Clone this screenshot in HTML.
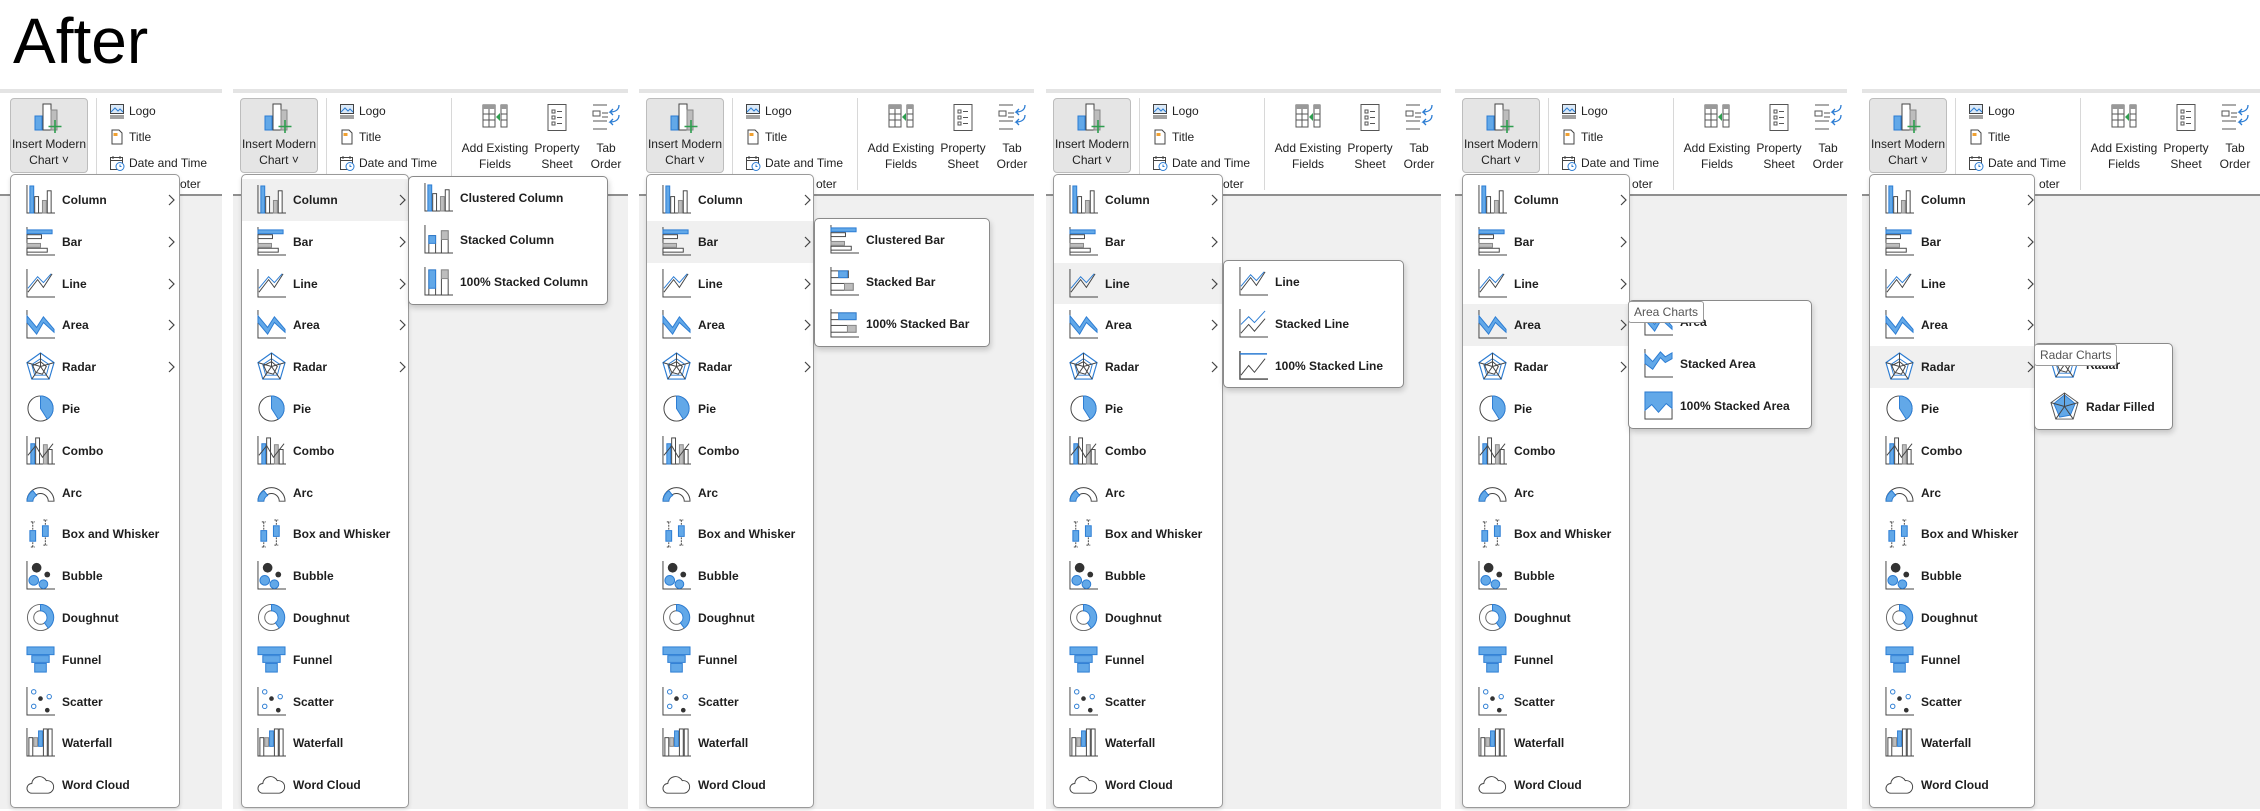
<!DOCTYPE html>
<html><head><meta charset="utf-8"><style>
*{box-sizing:border-box;margin:0;padding:0}
body{width:2260px;height:811px;background:#fff;position:relative;overflow:hidden;font-family:"Liberation Sans",Arial,sans-serif;color:#1f1f1f}
.h1{position:absolute;left:13px;top:1px;font-size:64px;line-height:80px;color:#000}
.p{position:absolute;top:0;height:811px;overflow:hidden}
.strip{position:absolute;left:0;right:0;top:89px;height:4px;background:#e4e4e4}
.rib{position:absolute;left:0;right:0;top:93px;height:101px;background:#fff}
.rl{position:absolute;left:0;right:0;top:194px;height:2px;background:#8f8f8f}
.gr{position:absolute;left:0;right:0;top:196px;height:613px;background:#f0f0f0}
.btn{position:absolute;left:7px;top:98px;width:78px;height:75px;background:#e5e5e5;border:1px solid #bdbdbd;border-radius:4px;font-size:12px;text-align:center;color:#222}
.btn svg{position:absolute;left:22px;top:3px}
.btn .t1{position:absolute;left:0;right:0;top:38px;line-height:14px}
.btn .t2{position:absolute;left:0;right:0;top:54px;line-height:14px}
.sep{position:absolute;top:98px;height:92px;width:1px;background:#d8d8d8}
.sm{position:absolute;font-size:12px;line-height:14px;color:#222;white-space:nowrap}
.sm svg{position:absolute;left:-20px;top:-1px}
.big{position:absolute;top:103px;width:70px;margin-left:-35px;text-align:center;font-size:12px;line-height:16px;color:#222}
.big svg{display:block;margin:0 auto 9px}
.menu{position:absolute;top:174px;height:634px;background:#fff;border:1px solid #9a9a9a;border-radius:5px;padding-top:4px;box-shadow:0 2px 4px rgba(0,0,0,.12)}
.sub{position:absolute;background:#fff;border:1px solid #8a8a8a;border-radius:5px;box-shadow:1px 3px 6px rgba(0,0,0,.18)}
.it{position:relative;height:41.8px;font-size:12px;font-weight:bold;color:#1e1e1e;white-space:nowrap}
.sub .it{height:42px}
.it svg.ic{position:absolute;left:15px;top:6px}
.it span{position:absolute;left:51px;top:14px;line-height:14px}
.sub .it svg.ic{left:15px}
.sub .it span{left:51px}
.it svg.ch{position:absolute;left:156px;top:15px}
.hl{background:#f0f0f0}
.tip{position:absolute;background:#fff;border:1px solid #9a9a9a;border-radius:3px;font-size:12px;color:#555;line-height:20px;padding:0 5px;white-space:nowrap;z-index:5}
</style></head><body>
<svg width="0" height="0" style="position:absolute">
<defs>
<symbol id="ch" viewBox="0 0 8 12"><path d="M2 1l5 5-5 5" fill="none" stroke="#444" stroke-width="1.2"/></symbol>
<symbol id="ins" viewBox="0 0 32 32"><rect x="2" y="14" width="7" height="14" fill="#62a8e8" stroke="#2b7cd3"/><rect x="10" y="2" width="8" height="26" fill="#fff" stroke="#444"/><rect x="18" y="8" width="6" height="20" fill="#bdbdbd" stroke="#888"/><path d="M22 18v13M15.5 24.5h13" stroke="#2e9e4f" stroke-width="1.6"/></symbol>
<symbol id="logo" viewBox="0 0 16 16"><rect x="1.5" y="1.5" width="13" height="9" fill="#dbe9f7" stroke="#444"/><path d="M2 9l4-4 3 3 2-2 3 3" fill="none" stroke="#2b7cd3"/><path d="M1 13h14M1 15h14" stroke="#444"/></symbol>
<symbol id="title" viewBox="0 0 16 16"><path d="M3 1h7l3 3v11H3z" fill="#fff" stroke="#444"/><rect x="4.5" y="4" width="4" height="3" fill="#f0a030"/></symbol>
<symbol id="date" viewBox="0 0 16 16"><rect x="1.5" y="2.5" width="12" height="12" fill="#fff" stroke="#444"/><path d="M1.5 5.5h12M4 1v3M11 1v3" stroke="#444"/><circle cx="11" cy="11.5" r="4" fill="#fff" stroke="#2b7cd3"/><path d="M11 9.5v2h1.5" fill="none" stroke="#2b7cd3"/></symbol>
<symbol id="add" viewBox="0 0 28 28"><rect x="2" y="2" width="12" height="22" fill="#fff" stroke="#555"/><rect x="2" y="2" width="12" height="4" fill="#999"/><path d="M2 11h12M2 17h12M8 6v18" stroke="#555"/><rect x="20" y="2" width="6" height="22" fill="#fff" stroke="#555"/><rect x="20" y="2" width="6" height="4" fill="#999"/><path d="M20 11h6M20 17h6" stroke="#555"/><path d="M19 10l-4 4 4 4z" fill="#2e9e4f"/></symbol>
<symbol id="prop" viewBox="0 0 28 28"><rect x="5" y="1.5" width="18" height="26" fill="#fff" stroke="#555"/><path d="M9 7h3v3H9zM9 13h3v3H9zM9 19h3v3H9zM14 8.5h5M14 14.5h5M14 20.5h5" fill="none" stroke="#555"/></symbol>
<symbol id="tab" viewBox="0 0 28 28"><path d="M1 2h14M1 26h14" stroke="#555"/><rect x="1" y="8" width="7" height="5" fill="#fff" stroke="#555"/><path d="M1 18h14M10 10h6M10 14h6" stroke="#555"/><path d="M27 2c0 5-4 7-9 7l3-3M18 9l3 3M27 12c0 5-4 7-9 7l3-3M18 19l3 3" fill="none" stroke="#2b7cd3" stroke-width="1.3"/></symbol>
<symbol id="col" viewBox="0 0 30 30"><path d="M1 0v29h29" fill="none" stroke="#444"/><rect x="4" y="1" width="4" height="28" fill="#62a8e8" stroke="#2b7cd3"/><rect x="9" y="12" width="4" height="17" fill="#fff" stroke="#444"/><rect x="17" y="16" width="4" height="13" fill="#bdbdbd" stroke="#888"/><rect x="22" y="6" width="4" height="23" fill="#fff" stroke="#444"/></symbol>
<symbol id="bar" viewBox="0 0 30 30"><path d="M1 0v29h29" fill="none" stroke="#444"/><rect x="1" y="3" width="26" height="4" fill="#62a8e8" stroke="#2b7cd3"/><rect x="1" y="8" width="15" height="4" fill="#fff" stroke="#444"/><rect x="1" y="17" width="14" height="4" fill="#bdbdbd" stroke="#888"/><rect x="1" y="22" width="21" height="4" fill="#fff" stroke="#444"/></symbol>
<symbol id="line" viewBox="0 0 30 30"><path d="M1 0v29h29" fill="none" stroke="#444"/><path d="M2 20L12 8l6 6 8-9" fill="none" stroke="#2b7cd3"/><path d="M2 24L12 11l6 8 9-14" fill="none" stroke="#444"/></symbol>
<symbol id="area" viewBox="0 0 30 30"><path d="M1 0v29h29" fill="none" stroke="#444"/><path d="M1 6l10 12 7-11 11 13v3l-11-10-7 12L1 13z" fill="#62a8e8" stroke="#2b7cd3"/></symbol>
<symbol id="radar" viewBox="0 0 30 30"><path d="M15 1l14 10-5 17H6L1 11z" fill="#fff" stroke="#2b7cd3" stroke-width="1.2"/><path d="M15 7l9 6-3 11H9L6 13z" fill="none" stroke="#2b7cd3"/><path d="M15 1v14M1 11l14 4 14-4M6 28l9-13 9 13" fill="none" stroke="#444"/><path d="M15 10l6 5-4 8-7-2-3-7z" fill="none" stroke="#444"/></symbol>
<symbol id="pie" viewBox="0 0 30 30"><circle cx="15" cy="15" r="13" fill="#fff" stroke="#444"/><path d="M15 15V2a13 13 0 0 1 7 24z" fill="#62a8e8" stroke="#2b7cd3"/></symbol>
<symbol id="combo" viewBox="0 0 30 30"><path d="M1 0v29h29" fill="none" stroke="#444"/><rect x="5" y="8" width="4" height="21" fill="#62a8e8" stroke="#2b7cd3"/><rect x="10" y="2" width="4" height="27" fill="#fff" stroke="#444"/><rect x="18" y="9" width="4" height="20" fill="#bdbdbd" stroke="#888"/><rect x="23" y="14" width="4" height="15" fill="#fff" stroke="#444"/><path d="M2 20l8-10 7 12 11-14" fill="none" stroke="#444"/></symbol>
<symbol id="arc" viewBox="0 0 30 30"><path d="M1 24a14 14 0 0 1 28 0h-6a8 8 0 0 0-16 0z" fill="#fff" stroke="#444"/><path d="M1 24a14 14 0 0 1 6-11l4 5a8 8 0 0 0-4 6z" fill="#62a8e8" stroke="#2b7cd3"/></symbol>
<symbol id="box" viewBox="0 0 30 30"><path d="M7 3v26M20 1v26M5 3h4M5 29h4M18 1h4M18 27h4" stroke="#444" stroke-dasharray="2 1"/><rect x="4" y="12" width="6" height="11" fill="#62a8e8" stroke="#2b7cd3"/><rect x="17" y="7" width="6" height="11" fill="#62a8e8" stroke="#2b7cd3"/></symbol>
<symbol id="bubble" viewBox="0 0 30 30"><path d="M1 0v29h29" fill="none" stroke="#444"/><circle cx="11" cy="7" r="5" fill="#333"/><circle cx="22" cy="14" r="3" fill="#333"/><circle cx="8" cy="20" r="5" fill="#62a8e8" stroke="#2b7cd3"/><circle cx="18" cy="24" r="4.5" fill="#62a8e8" stroke="#2b7cd3"/></symbol>
<symbol id="dough" viewBox="0 0 30 30"><circle cx="15" cy="15" r="13.5" fill="#fff" stroke="#666"/><circle cx="15" cy="15" r="7" fill="#fff" stroke="#666"/><path d="M15 1.5a13.5 13.5 0 0 1 8 24.5l-4-5.5a7 7 0 0 0-4-12.5z" fill="#62a8e8" stroke="#2b7cd3"/></symbol>
<symbol id="funnel" viewBox="0 0 30 30"><rect x="1" y="2" width="28" height="8" fill="#62a8e8" stroke="#2b7cd3"/><rect x="6" y="11" width="18" height="7" fill="#62a8e8" stroke="#2b7cd3"/><rect x="9" y="19" width="12" height="9" fill="#62a8e8" stroke="#2b7cd3"/></symbol>
<symbol id="scatter" viewBox="0 0 30 30"><path d="M1 0v29h29" fill="none" stroke="#444"/><circle cx="8" cy="5" r="2.3" fill="#fff" stroke="#2b7cd3"/><circle cx="24" cy="10" r="2.3" fill="#fff" stroke="#2b7cd3"/><circle cx="8" cy="20" r="2.3" fill="#fff" stroke="#2b7cd3"/><circle cx="15" cy="12" r="2.4" fill="#333"/><circle cx="22" cy="24" r="2.4" fill="#333"/></symbol>
<symbol id="wf" viewBox="0 0 30 30"><path d="M1 0v29h29" fill="none" stroke="#444"/><rect x="3" y="10" width="4" height="19" fill="#fff" stroke="#444"/><rect x="8" y="10" width="4" height="9" fill="#bdbdbd" stroke="#888"/><rect x="13" y="3" width="4" height="16" fill="#62a8e8" stroke="#2b7cd3"/><rect x="18" y="1" width="4" height="28" fill="#fff" stroke="#444"/><rect x="23" y="1" width="4" height="28" fill="#fff" stroke="#444"/></symbol>
<symbol id="cloud" viewBox="0 0 30 30"><path d="M6 24a5 5 0 0 1 0-10 8 8 0 0 1 15-3 6 6 0 0 1 2 13z" fill="#fff" stroke="#444"/></symbol>
<symbol id="ccol" viewBox="0 0 30 30"><path d="M1 0v29h29" fill="none" stroke="#444"/><rect x="4" y="2" width="4" height="27" fill="#62a8e8" stroke="#2b7cd3"/><rect x="9" y="11" width="4" height="18" fill="#fff" stroke="#444"/><rect x="17" y="14" width="4" height="15" fill="#bdbdbd" stroke="#888"/><rect x="22" y="7" width="4" height="22" fill="#fff" stroke="#444"/></symbol>
<symbol id="scol" viewBox="0 0 30 30"><path d="M1 0v29h29" fill="none" stroke="#444"/><rect x="5" y="11" width="7" height="18" fill="#fff" stroke="#444"/><rect x="5" y="11" width="7" height="8" fill="#62a8e8" stroke="#2b7cd3"/><rect x="18" y="6" width="7" height="23" fill="#fff" stroke="#444"/><rect x="18" y="6" width="7" height="9" fill="#bdbdbd" stroke="#888"/></symbol>
<symbol id="pcol" viewBox="0 0 30 30"><path d="M1 0v29h29" fill="none" stroke="#444"/><rect x="5" y="3" width="7" height="26" fill="#fff" stroke="#444"/><rect x="5" y="3" width="7" height="19" fill="#62a8e8" stroke="#2b7cd3"/><rect x="18" y="3" width="7" height="26" fill="#fff" stroke="#444"/><rect x="18" y="3" width="7" height="9" fill="#bdbdbd" stroke="#888"/></symbol>
<symbol id="sbar" viewBox="0 0 30 30"><path d="M1 0v29h29" fill="none" stroke="#444"/><rect x="1" y="4" width="18" height="7" fill="#fff" stroke="#444"/><rect x="9" y="4" width="9" height="7" fill="#62a8e8" stroke="#2b7cd3"/><rect x="1" y="17" width="23" height="7" fill="#fff" stroke="#444"/><rect x="15" y="17" width="9" height="7" fill="#bdbdbd" stroke="#888"/></symbol>
<symbol id="pbar" viewBox="0 0 30 30"><path d="M1 0v29h29" fill="none" stroke="#444"/><rect x="1" y="4" width="26" height="7" fill="#fff" stroke="#444"/><rect x="9" y="4" width="18" height="7" fill="#62a8e8" stroke="#2b7cd3"/><rect x="1" y="17" width="26" height="7" fill="#fff" stroke="#444"/><rect x="18" y="17" width="9" height="7" fill="#bdbdbd" stroke="#888"/></symbol>
<symbol id="sline" viewBox="0 0 30 30"><path d="M1 0v29h29" fill="none" stroke="#444"/><path d="M2 16L10 8l6 6 11-12" fill="none" stroke="#2b7cd3"/><path d="M2 25l8-9 6 7 11-13" fill="none" stroke="#444"/></symbol>
<symbol id="pline" viewBox="0 0 30 30"><path d="M1 0v29h29" fill="none" stroke="#444" stroke-width="1.4"/><path d="M1 3h28" stroke="#2b7cd3" stroke-width="1.6"/><path d="M2 25l8-10 6 7 11-14" fill="none" stroke="#444"/></symbol>
<symbol id="sarea" viewBox="0 0 30 30"><path d="M1 0v29h29" fill="none" stroke="#444"/><path d="M1 5l8 8 8-10 5 5 7-4v6l-7 4-5-5-8 12L1 15z" fill="#62a8e8" stroke="#2b7cd3"/></symbol>
<symbol id="parea" viewBox="0 0 30 30"><rect x="1" y="1" width="28" height="28" fill="#fff" stroke="#444"/><path d="M1 1h28v17l-6-5-8 9-7-8-7 6z" fill="#62a8e8" stroke="#2b7cd3"/></symbol>
<symbol id="rfill" viewBox="0 0 30 30"><path d="M15 1l14 10-5 17H6L1 11z" fill="#fff" stroke="#555"/><path d="M15 3l11 9-5 12-11 2-6-14z" fill="#62a8e8" stroke="#2b7cd3"/><path d="M15 1v14M1 11l14 4 14-4M6 28l9-13 9 13" fill="none" stroke="#444"/></symbol>
</defs></svg>

<div class="h1">After</div>

<!-- ================= P1 ================= -->
<div class="p" style="left:0;width:222px">
<div class="strip"></div><div class="rib"></div><div class="rl"></div><div class="gr"></div>
<div style="position:absolute;left:3px;top:0;width:400px;height:811px">
<div class="btn"><svg width="32" height="32"><use href="#ins"/></svg><div class="t1">Insert Modern</div><div class="t2">Chart ˅</div></div>
<div class="sep" style="left:93px"></div>
<div class="sm" style="left:126px;top:104px"><svg width="16" height="16"><use href="#logo"/></svg>Logo</div>
<div class="sm" style="left:126px;top:130px"><svg width="16" height="16"><use href="#title"/></svg>Title</div>
<div class="sm" style="left:126px;top:156px"><svg width="16" height="16"><use href="#date"/></svg>Date and Time</div>
<div class="sm" style="left:177px;top:177px">oter</div>
<div class="menu" style="left:7px;width:170px">
<div class="it"><svg class="ic" width="29" height="29"><use href="#col"/></svg><span>Column</span><svg class="ch" width="8" height="12"><use href="#ch"/></svg></div>
<div class="it"><svg class="ic" width="29" height="29"><use href="#bar"/></svg><span>Bar</span><svg class="ch" width="8" height="12"><use href="#ch"/></svg></div>
<div class="it"><svg class="ic" width="29" height="29"><use href="#line"/></svg><span>Line</span><svg class="ch" width="8" height="12"><use href="#ch"/></svg></div>
<div class="it"><svg class="ic" width="29" height="29"><use href="#area"/></svg><span>Area</span><svg class="ch" width="8" height="12"><use href="#ch"/></svg></div>
<div class="it"><svg class="ic" width="29" height="29"><use href="#radar"/></svg><span>Radar</span><svg class="ch" width="8" height="12"><use href="#ch"/></svg></div>
<div class="it"><svg class="ic" width="29" height="29"><use href="#pie"/></svg><span>Pie</span></div>
<div class="it"><svg class="ic" width="29" height="29"><use href="#combo"/></svg><span>Combo</span></div>
<div class="it"><svg class="ic" width="29" height="29"><use href="#arc"/></svg><span>Arc</span></div>
<div class="it"><svg class="ic" width="29" height="29"><use href="#box"/></svg><span>Box and Whisker</span></div>
<div class="it"><svg class="ic" width="29" height="29"><use href="#bubble"/></svg><span>Bubble</span></div>
<div class="it"><svg class="ic" width="29" height="29"><use href="#dough"/></svg><span>Doughnut</span></div>
<div class="it"><svg class="ic" width="29" height="29"><use href="#funnel"/></svg><span>Funnel</span></div>
<div class="it"><svg class="ic" width="29" height="29"><use href="#scatter"/></svg><span>Scatter</span></div>
<div class="it"><svg class="ic" width="29" height="29"><use href="#wf"/></svg><span>Waterfall</span></div>
<div class="it"><svg class="ic" width="29" height="29"><use href="#cloud"/></svg><span>Word Cloud</span></div>
</div>
</div>
</div>

<!-- ================= P2 ================= -->
<div class="p" style="left:233px;width:395px">
<div class="strip"></div><div class="rib"></div><div class="rl"></div><div class="gr"></div>
<div class="btn"><svg width="32" height="32"><use href="#ins"/></svg><div class="t1">Insert Modern</div><div class="t2">Chart ˅</div></div>
<div class="sep" style="left:93px"></div>
<div class="sm" style="left:126px;top:104px"><svg width="16" height="16"><use href="#logo"/></svg>Logo</div>
<div class="sm" style="left:126px;top:130px"><svg width="16" height="16"><use href="#title"/></svg>Title</div>
<div class="sm" style="left:126px;top:156px"><svg width="16" height="16"><use href="#date"/></svg>Date and Time</div>
<div class="sm" style="left:177px;top:177px">oter</div>
<div class="sep" style="left:218px"></div>
<div class="big" style="left:262px"><svg width="28" height="28"><use href="#add"/></svg>Add Existing<br>Fields</div>
<div class="big" style="left:324px"><svg width="28" height="28"><use href="#prop"/></svg>Property<br>Sheet</div>
<div class="big" style="left:373px"><svg width="28" height="28"><use href="#tab"/></svg>Tab<br>Order</div>
<div class="menu" style="left:8px;width:168px">
<div class="it hl"><svg class="ic" width="29" height="29"><use href="#col"/></svg><span>Column</span><svg class="ch" width="8" height="12"><use href="#ch"/></svg></div>
<div class="it"><svg class="ic" width="29" height="29"><use href="#bar"/></svg><span>Bar</span><svg class="ch" width="8" height="12"><use href="#ch"/></svg></div>
<div class="it"><svg class="ic" width="29" height="29"><use href="#line"/></svg><span>Line</span><svg class="ch" width="8" height="12"><use href="#ch"/></svg></div>
<div class="it"><svg class="ic" width="29" height="29"><use href="#area"/></svg><span>Area</span><svg class="ch" width="8" height="12"><use href="#ch"/></svg></div>
<div class="it"><svg class="ic" width="29" height="29"><use href="#radar"/></svg><span>Radar</span><svg class="ch" width="8" height="12"><use href="#ch"/></svg></div>
<div class="it"><svg class="ic" width="29" height="29"><use href="#pie"/></svg><span>Pie</span></div>
<div class="it"><svg class="ic" width="29" height="29"><use href="#combo"/></svg><span>Combo</span></div>
<div class="it"><svg class="ic" width="29" height="29"><use href="#arc"/></svg><span>Arc</span></div>
<div class="it"><svg class="ic" width="29" height="29"><use href="#box"/></svg><span>Box and Whisker</span></div>
<div class="it"><svg class="ic" width="29" height="29"><use href="#bubble"/></svg><span>Bubble</span></div>
<div class="it"><svg class="ic" width="29" height="29"><use href="#dough"/></svg><span>Doughnut</span></div>
<div class="it"><svg class="ic" width="29" height="29"><use href="#funnel"/></svg><span>Funnel</span></div>
<div class="it"><svg class="ic" width="29" height="29"><use href="#scatter"/></svg><span>Scatter</span></div>
<div class="it"><svg class="ic" width="29" height="29"><use href="#wf"/></svg><span>Waterfall</span></div>
<div class="it"><svg class="ic" width="29" height="29"><use href="#cloud"/></svg><span>Word Cloud</span></div>
</div>
<div class="sub" style="left:175px;top:176px;width:200px;height:129px">
<div class="it"><svg class="ic" width="29" height="29"><use href="#ccol"/></svg><span>Clustered Column</span></div>
<div class="it"><svg class="ic" width="29" height="29"><use href="#scol"/></svg><span>Stacked Column</span></div>
<div class="it"><svg class="ic" width="29" height="29"><use href="#pcol"/></svg><span>100% Stacked Column</span></div>
</div>
</div>

<!-- ================= P3 ================= -->
<div class="p" style="left:639px;width:395px">
<div class="strip"></div><div class="rib"></div><div class="rl"></div><div class="gr"></div>
<div class="btn"><svg width="32" height="32"><use href="#ins"/></svg><div class="t1">Insert Modern</div><div class="t2">Chart ˅</div></div>
<div class="sep" style="left:93px"></div>
<div class="sm" style="left:126px;top:104px"><svg width="16" height="16"><use href="#logo"/></svg>Logo</div>
<div class="sm" style="left:126px;top:130px"><svg width="16" height="16"><use href="#title"/></svg>Title</div>
<div class="sm" style="left:126px;top:156px"><svg width="16" height="16"><use href="#date"/></svg>Date and Time</div>
<div class="sm" style="left:177px;top:177px">oter</div>
<div class="sep" style="left:218px"></div>
<div class="big" style="left:262px"><svg width="28" height="28"><use href="#add"/></svg>Add Existing<br>Fields</div>
<div class="big" style="left:324px"><svg width="28" height="28"><use href="#prop"/></svg>Property<br>Sheet</div>
<div class="big" style="left:373px"><svg width="28" height="28"><use href="#tab"/></svg>Tab<br>Order</div>
<div class="menu" style="left:7px;width:168px">
<div class="it"><svg class="ic" width="29" height="29"><use href="#col"/></svg><span>Column</span><svg class="ch" width="8" height="12"><use href="#ch"/></svg></div>
<div class="it hl"><svg class="ic" width="29" height="29"><use href="#bar"/></svg><span>Bar</span><svg class="ch" width="8" height="12"><use href="#ch"/></svg></div>
<div class="it"><svg class="ic" width="29" height="29"><use href="#line"/></svg><span>Line</span><svg class="ch" width="8" height="12"><use href="#ch"/></svg></div>
<div class="it"><svg class="ic" width="29" height="29"><use href="#area"/></svg><span>Area</span><svg class="ch" width="8" height="12"><use href="#ch"/></svg></div>
<div class="it"><svg class="ic" width="29" height="29"><use href="#radar"/></svg><span>Radar</span><svg class="ch" width="8" height="12"><use href="#ch"/></svg></div>
<div class="it"><svg class="ic" width="29" height="29"><use href="#pie"/></svg><span>Pie</span></div>
<div class="it"><svg class="ic" width="29" height="29"><use href="#combo"/></svg><span>Combo</span></div>
<div class="it"><svg class="ic" width="29" height="29"><use href="#arc"/></svg><span>Arc</span></div>
<div class="it"><svg class="ic" width="29" height="29"><use href="#box"/></svg><span>Box and Whisker</span></div>
<div class="it"><svg class="ic" width="29" height="29"><use href="#bubble"/></svg><span>Bubble</span></div>
<div class="it"><svg class="ic" width="29" height="29"><use href="#dough"/></svg><span>Doughnut</span></div>
<div class="it"><svg class="ic" width="29" height="29"><use href="#funnel"/></svg><span>Funnel</span></div>
<div class="it"><svg class="ic" width="29" height="29"><use href="#scatter"/></svg><span>Scatter</span></div>
<div class="it"><svg class="ic" width="29" height="29"><use href="#wf"/></svg><span>Waterfall</span></div>
<div class="it"><svg class="ic" width="29" height="29"><use href="#cloud"/></svg><span>Word Cloud</span></div>
</div>
<div class="sub" style="left:175px;top:218px;width:176px;height:129px">
<div class="it"><svg class="ic" width="29" height="29"><use href="#bar"/></svg><span>Clustered Bar</span></div>
<div class="it"><svg class="ic" width="29" height="29"><use href="#sbar"/></svg><span>Stacked Bar</span></div>
<div class="it"><svg class="ic" width="29" height="29"><use href="#pbar"/></svg><span>100% Stacked Bar</span></div>
</div>
</div>

<!-- ================= P4 ================= -->
<div class="p" style="left:1046px;width:395px">
<div class="strip"></div><div class="rib"></div><div class="rl"></div><div class="gr"></div>
<div class="btn"><svg width="32" height="32"><use href="#ins"/></svg><div class="t1">Insert Modern</div><div class="t2">Chart ˅</div></div>
<div class="sep" style="left:93px"></div>
<div class="sm" style="left:126px;top:104px"><svg width="16" height="16"><use href="#logo"/></svg>Logo</div>
<div class="sm" style="left:126px;top:130px"><svg width="16" height="16"><use href="#title"/></svg>Title</div>
<div class="sm" style="left:126px;top:156px"><svg width="16" height="16"><use href="#date"/></svg>Date and Time</div>
<div class="sm" style="left:177px;top:177px">oter</div>
<div class="sep" style="left:218px"></div>
<div class="big" style="left:262px"><svg width="28" height="28"><use href="#add"/></svg>Add Existing<br>Fields</div>
<div class="big" style="left:324px"><svg width="28" height="28"><use href="#prop"/></svg>Property<br>Sheet</div>
<div class="big" style="left:373px"><svg width="28" height="28"><use href="#tab"/></svg>Tab<br>Order</div>
<div class="menu" style="left:7px;width:170px">
<div class="it"><svg class="ic" width="29" height="29"><use href="#col"/></svg><span>Column</span><svg class="ch" width="8" height="12"><use href="#ch"/></svg></div>
<div class="it"><svg class="ic" width="29" height="29"><use href="#bar"/></svg><span>Bar</span><svg class="ch" width="8" height="12"><use href="#ch"/></svg></div>
<div class="it hl"><svg class="ic" width="29" height="29"><use href="#line"/></svg><span>Line</span><svg class="ch" width="8" height="12"><use href="#ch"/></svg></div>
<div class="it"><svg class="ic" width="29" height="29"><use href="#area"/></svg><span>Area</span><svg class="ch" width="8" height="12"><use href="#ch"/></svg></div>
<div class="it"><svg class="ic" width="29" height="29"><use href="#radar"/></svg><span>Radar</span><svg class="ch" width="8" height="12"><use href="#ch"/></svg></div>
<div class="it"><svg class="ic" width="29" height="29"><use href="#pie"/></svg><span>Pie</span></div>
<div class="it"><svg class="ic" width="29" height="29"><use href="#combo"/></svg><span>Combo</span></div>
<div class="it"><svg class="ic" width="29" height="29"><use href="#arc"/></svg><span>Arc</span></div>
<div class="it"><svg class="ic" width="29" height="29"><use href="#box"/></svg><span>Box and Whisker</span></div>
<div class="it"><svg class="ic" width="29" height="29"><use href="#bubble"/></svg><span>Bubble</span></div>
<div class="it"><svg class="ic" width="29" height="29"><use href="#dough"/></svg><span>Doughnut</span></div>
<div class="it"><svg class="ic" width="29" height="29"><use href="#funnel"/></svg><span>Funnel</span></div>
<div class="it"><svg class="ic" width="29" height="29"><use href="#scatter"/></svg><span>Scatter</span></div>
<div class="it"><svg class="ic" width="29" height="29"><use href="#wf"/></svg><span>Waterfall</span></div>
<div class="it"><svg class="ic" width="29" height="29"><use href="#cloud"/></svg><span>Word Cloud</span></div>
</div>
<div class="sub" style="left:177px;top:260px;width:181px;height:128px">
<div class="it"><svg class="ic" width="29" height="29"><use href="#line"/></svg><span>Line</span></div>
<div class="it"><svg class="ic" width="29" height="29"><use href="#sline"/></svg><span>Stacked Line</span></div>
<div class="it"><svg class="ic" width="29" height="29"><use href="#pline"/></svg><span>100% Stacked Line</span></div>
</div>
</div>

<!-- ================= P5 ================= -->
<div class="p" style="left:1455px;width:392px">
<div class="strip"></div><div class="rib"></div><div class="rl"></div><div class="gr"></div>
<div class="btn"><svg width="32" height="32"><use href="#ins"/></svg><div class="t1">Insert Modern</div><div class="t2">Chart ˅</div></div>
<div class="sep" style="left:93px"></div>
<div class="sm" style="left:126px;top:104px"><svg width="16" height="16"><use href="#logo"/></svg>Logo</div>
<div class="sm" style="left:126px;top:130px"><svg width="16" height="16"><use href="#title"/></svg>Title</div>
<div class="sm" style="left:126px;top:156px"><svg width="16" height="16"><use href="#date"/></svg>Date and Time</div>
<div class="sm" style="left:177px;top:177px">oter</div>
<div class="sep" style="left:218px"></div>
<div class="big" style="left:262px"><svg width="28" height="28"><use href="#add"/></svg>Add Existing<br>Fields</div>
<div class="big" style="left:324px"><svg width="28" height="28"><use href="#prop"/></svg>Property<br>Sheet</div>
<div class="big" style="left:373px"><svg width="28" height="28"><use href="#tab"/></svg>Tab<br>Order</div>
<div class="menu" style="left:7px;width:168px">
<div class="it"><svg class="ic" width="29" height="29"><use href="#col"/></svg><span>Column</span><svg class="ch" width="8" height="12"><use href="#ch"/></svg></div>
<div class="it"><svg class="ic" width="29" height="29"><use href="#bar"/></svg><span>Bar</span><svg class="ch" width="8" height="12"><use href="#ch"/></svg></div>
<div class="it"><svg class="ic" width="29" height="29"><use href="#line"/></svg><span>Line</span><svg class="ch" width="8" height="12"><use href="#ch"/></svg></div>
<div class="it hl"><svg class="ic" width="29" height="29"><use href="#area"/></svg><span>Area</span><svg class="ch" width="8" height="12"><use href="#ch"/></svg></div>
<div class="it"><svg class="ic" width="29" height="29"><use href="#radar"/></svg><span>Radar</span><svg class="ch" width="8" height="12"><use href="#ch"/></svg></div>
<div class="it"><svg class="ic" width="29" height="29"><use href="#pie"/></svg><span>Pie</span></div>
<div class="it"><svg class="ic" width="29" height="29"><use href="#combo"/></svg><span>Combo</span></div>
<div class="it"><svg class="ic" width="29" height="29"><use href="#arc"/></svg><span>Arc</span></div>
<div class="it"><svg class="ic" width="29" height="29"><use href="#box"/></svg><span>Box and Whisker</span></div>
<div class="it"><svg class="ic" width="29" height="29"><use href="#bubble"/></svg><span>Bubble</span></div>
<div class="it"><svg class="ic" width="29" height="29"><use href="#dough"/></svg><span>Doughnut</span></div>
<div class="it"><svg class="ic" width="29" height="29"><use href="#funnel"/></svg><span>Funnel</span></div>
<div class="it"><svg class="ic" width="29" height="29"><use href="#scatter"/></svg><span>Scatter</span></div>
<div class="it"><svg class="ic" width="29" height="29"><use href="#wf"/></svg><span>Waterfall</span></div>
<div class="it"><svg class="ic" width="29" height="29"><use href="#cloud"/></svg><span>Word Cloud</span></div>
</div>
<div class="sub" style="left:173px;top:300px;width:184px;height:129px">
<div class="it"><svg class="ic" width="29" height="29"><use href="#area"/></svg><span>Area</span></div>
<div class="it"><svg class="ic" width="29" height="29"><use href="#sarea"/></svg><span>Stacked Area</span></div>
<div class="it"><svg class="ic" width="29" height="29"><use href="#parea"/></svg><span>100% Stacked Area</span></div>
</div>
<div class="tip" style="left:173px;top:301px">Area Charts</div>
</div>

<!-- ================= P6 ================= -->
<div class="p" style="left:1862px;width:398px">
<div class="strip"></div><div class="rib"></div><div class="rl"></div><div class="gr"></div>
<div class="btn"><svg width="32" height="32"><use href="#ins"/></svg><div class="t1">Insert Modern</div><div class="t2">Chart ˅</div></div>
<div class="sep" style="left:93px"></div>
<div class="sm" style="left:126px;top:104px"><svg width="16" height="16"><use href="#logo"/></svg>Logo</div>
<div class="sm" style="left:126px;top:130px"><svg width="16" height="16"><use href="#title"/></svg>Title</div>
<div class="sm" style="left:126px;top:156px"><svg width="16" height="16"><use href="#date"/></svg>Date and Time</div>
<div class="sm" style="left:177px;top:177px">oter</div>
<div class="sep" style="left:218px"></div>
<div class="big" style="left:262px"><svg width="28" height="28"><use href="#add"/></svg>Add Existing<br>Fields</div>
<div class="big" style="left:324px"><svg width="28" height="28"><use href="#prop"/></svg>Property<br>Sheet</div>
<div class="big" style="left:373px"><svg width="28" height="28"><use href="#tab"/></svg>Tab<br>Order</div>
<div class="menu" style="left:7px;width:166px">
<div class="it"><svg class="ic" width="29" height="29"><use href="#col"/></svg><span>Column</span><svg class="ch" width="8" height="12"><use href="#ch"/></svg></div>
<div class="it"><svg class="ic" width="29" height="29"><use href="#bar"/></svg><span>Bar</span><svg class="ch" width="8" height="12"><use href="#ch"/></svg></div>
<div class="it"><svg class="ic" width="29" height="29"><use href="#line"/></svg><span>Line</span><svg class="ch" width="8" height="12"><use href="#ch"/></svg></div>
<div class="it"><svg class="ic" width="29" height="29"><use href="#area"/></svg><span>Area</span><svg class="ch" width="8" height="12"><use href="#ch"/></svg></div>
<div class="it hl"><svg class="ic" width="29" height="29"><use href="#radar"/></svg><span>Radar</span><svg class="ch" width="8" height="12"><use href="#ch"/></svg></div>
<div class="it"><svg class="ic" width="29" height="29"><use href="#pie"/></svg><span>Pie</span></div>
<div class="it"><svg class="ic" width="29" height="29"><use href="#combo"/></svg><span>Combo</span></div>
<div class="it"><svg class="ic" width="29" height="29"><use href="#arc"/></svg><span>Arc</span></div>
<div class="it"><svg class="ic" width="29" height="29"><use href="#box"/></svg><span>Box and Whisker</span></div>
<div class="it"><svg class="ic" width="29" height="29"><use href="#bubble"/></svg><span>Bubble</span></div>
<div class="it"><svg class="ic" width="29" height="29"><use href="#dough"/></svg><span>Doughnut</span></div>
<div class="it"><svg class="ic" width="29" height="29"><use href="#funnel"/></svg><span>Funnel</span></div>
<div class="it"><svg class="ic" width="29" height="29"><use href="#scatter"/></svg><span>Scatter</span></div>
<div class="it"><svg class="ic" width="29" height="29"><use href="#wf"/></svg><span>Waterfall</span></div>
<div class="it"><svg class="ic" width="29" height="29"><use href="#cloud"/></svg><span>Word Cloud</span></div>
</div>
<div class="sub" style="left:172px;top:343px;width:139px;height:87px">
<div class="it"><svg class="ic" width="29" height="29"><use href="#radar"/></svg><span>Radar</span></div>
<div class="it"><svg class="ic" width="29" height="29"><use href="#rfill"/></svg><span>Radar Filled</span></div>
</div>
<div class="tip" style="left:172px;top:344px">Radar Charts</div>
</div>
</body></html>
